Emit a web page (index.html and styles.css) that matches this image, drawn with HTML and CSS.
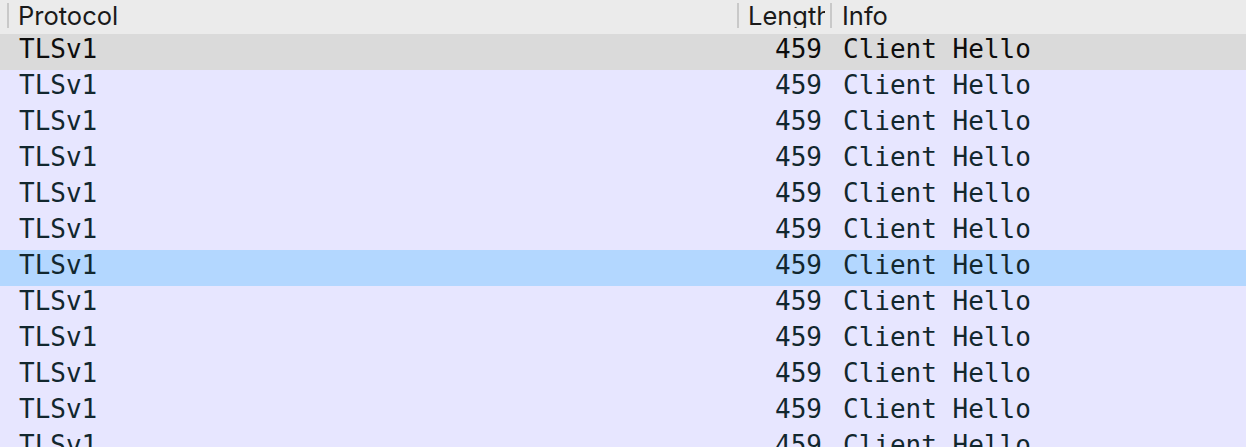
FILE: index.html
```html
<!DOCTYPE html>
<html>
<head>
<meta charset="utf-8">
<link rel="stylesheet" href="styles.css">
</head>
<body>
<div class="table">
  <div class="header">
    <div class="hcell c-proto">Protocol</div>
    <div class="hcell c-len">Length</div>
    <div class="hcell c-info">Info</div>
  </div>
  <div class="row current"><div class="cell c-proto">TLSv1</div><div class="cell c-len num">459</div><div class="cell c-info">Client Hello</div></div>
  <div class="row tcp"><div class="cell c-proto">TLSv1</div><div class="cell c-len num">459</div><div class="cell c-info">Client Hello</div></div>
  <div class="row tcp"><div class="cell c-proto">TLSv1</div><div class="cell c-len num">459</div><div class="cell c-info">Client Hello</div></div>
  <div class="row tcp"><div class="cell c-proto">TLSv1</div><div class="cell c-len num">459</div><div class="cell c-info">Client Hello</div></div>
  <div class="row tcp"><div class="cell c-proto">TLSv1</div><div class="cell c-len num">459</div><div class="cell c-info">Client Hello</div></div>
  <div class="row tcp"><div class="cell c-proto">TLSv1</div><div class="cell c-len num">459</div><div class="cell c-info">Client Hello</div></div>
  <div class="row selected"><div class="cell c-proto">TLSv1</div><div class="cell c-len num">459</div><div class="cell c-info">Client Hello</div></div>
  <div class="row tcp"><div class="cell c-proto">TLSv1</div><div class="cell c-len num">459</div><div class="cell c-info">Client Hello</div></div>
  <div class="row tcp"><div class="cell c-proto">TLSv1</div><div class="cell c-len num">459</div><div class="cell c-info">Client Hello</div></div>
  <div class="row tcp"><div class="cell c-proto">TLSv1</div><div class="cell c-len num">459</div><div class="cell c-info">Client Hello</div></div>
  <div class="row tcp"><div class="cell c-proto">TLSv1</div><div class="cell c-len num">459</div><div class="cell c-info">Client Hello</div></div>
  <div class="row tcp"><div class="cell c-proto">TLSv1</div><div class="cell c-len num">459</div><div class="cell c-info">Client Hello</div></div>
</div>
</body>
</html>
```
FILE: styles.css
```css
html, body {
  margin: 0;
  padding: 0;
  background: #e7e6ff;
  overflow: hidden;
}
.table {
  width: 1246px;
  height: 447px;
  overflow: hidden;
}
.header {
  display: grid;
  grid-template-columns: 7px 730px 93px 1fr;
  height: 34px;
  background: #ebebeb;
  font-family: Inter, "Noto Sans", sans-serif;
  font-size: 25.5px;
  color: #1a1a1a;
}
.header::before {
  content: "";
}
.hcell {
  border-left: 2px solid #c9c9c9;
  margin: 3px 0 6px;
  padding-left: 9px;
  line-height: 25px;
  white-space: nowrap;
}
.header .c-len {
  margin-right: 5px;
  overflow: hidden;
}
.header .c-info {
  padding-left: 10px;
}
.row {
  display: grid;
  grid-template-columns: 19px 700px 103px 21px 1fr;
  height: 36px;
  font-family: "DejaVu Sans Mono", monospace;
  font-size: 26px;
  line-height: 30px;
  color: #12272e;
}
.row::before {
  content: "";
}
.row .c-len {
  grid-column: 3;
  text-align: right;
}
.row .c-info {
  grid-column: 5;
}
.cell {
  white-space: nowrap;
}
.current {
  background: #dadada;
  color: #0d0d0d;
}
.tcp {
  background: #e7e6ff;
}
.selected {
  background: #b3d7ff;
  color: #12272e;
}
```
